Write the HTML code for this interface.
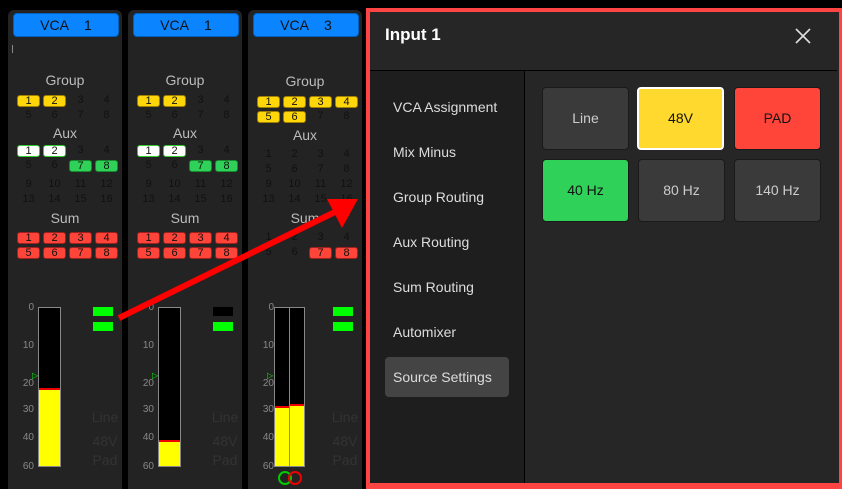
<!DOCTYPE html><html><head><style>
*{margin:0;padding:0;box-sizing:border-box}
html,body{width:842px;height:489px;overflow:hidden}
body{background:#000;position:relative;font-family:"Liberation Sans",sans-serif}
.s{position:absolute;top:10px;width:114px;height:479px;background:#232323;border-radius:6px 6px 0 0}
.v{position:absolute;left:5px;top:3px;width:106px;height:24px;background:#0a84ff;border:1px solid #0060c0;border-radius:4px;color:#111;font-size:14px;text-align:center;line-height:22px;word-spacing:12px}
.l{position:absolute;left:0;width:114px;text-align:center;color:#bbb;font-size:14px}
.r{position:absolute;left:9px;width:110px;height:12px}
.r span{position:absolute;top:0;width:23px;height:12px;font-size:11px;line-height:11px;text-align:center;color:#111;border-radius:3px}
.r span:nth-child(1){left:0}.r span:nth-child(2){left:26px}.r span:nth-child(3){left:52px}.r span:nth-child(4){left:78px}
.y{background:#ffd60a;border:1px solid #a08000}.w{background:#fff;border:1px solid #3c3}.g{background:#30d158;border:1px solid #1a8a30}.rd{background:#ff453a;border:1px solid #a02020}
.m{position:absolute;top:297px;height:160px;background:#000;border:1px solid #888}
.f{position:absolute;left:0;right:0;bottom:0;background:#ff0;border-top:2px solid #e00}
.t{position:absolute;left:0;width:26px;text-align:right;color:#888;font-size:10px}
.gb{position:absolute;left:85px;width:20px;height:9px;background:#0f0}
.ft{position:absolute;left:80px;width:34px;text-align:center;color:#333;font-size:14px;line-height:22px}
.sb{position:absolute;left:393px;color:#ddd;font-size:14px}
.b{position:absolute;width:87px;height:63px;border-radius:4px;background:#3a3a3a;border:1px solid #1a1a1a;color:#ccc;font-size:14px;text-align:center;line-height:61px}
</style></head><body>

<div class="s" style="left:8px">
<div class="v">VCA 1</div>
<div style="position:absolute;left:4px;top:35px;width:1px;height:8px;background:#888"></div>
<div class="l" style="top:62px">Group</div>
<div class="r" style="top:85px"><span class="y">1</span><span class="y">2</span><span>3</span><span>4</span></div>
<div class="r" style="top:100px"><span>5</span><span>6</span><span>7</span><span>8</span></div>
<div class="l" style="top:115px">Aux</div>
<div class="r" style="top:135px"><span class="w">1</span><span class="w">2</span><span>3</span><span>4</span></div>
<div class="r" style="top:150px"><span>5</span><span>6</span><span class="g">7</span><span class="g">8</span></div>
<div class="r" style="top:169px"><span>9</span><span>10</span><span>11</span><span>12</span></div>
<div class="r" style="top:184px"><span>13</span><span>14</span><span>15</span><span>16</span></div>
<div class="l" style="top:200px">Sum</div>
<div class="r" style="top:222px"><span class="rd">1</span><span class="rd">2</span><span class="rd">3</span><span class="rd">4</span></div>
<div class="r" style="top:237px"><span class="rd">5</span><span class="rd">6</span><span class="rd">7</span><span class="rd">8</span></div>
<div class="t" style="top:292px">0</div><div class="t" style="top:330px">10</div><div class="t" style="top:368px">20</div><div class="t" style="top:394px">30</div><div class="t" style="top:422px">40</div><div class="t" style="top:451px">60</div>
<div style="position:absolute;left:24px;top:361px;color:#0f0;font-size:8px">▷</div>
<div class="m" style="left:30px;width:23px"><div class="f" style="height:78px"></div></div>
<div class="gb" style="top:297px"></div><div class="gb" style="top:312px"></div>
<div class="ft" style="top:396px">Line</div><div class="ft" style="top:420px">48V</div><div class="ft" style="top:439px">Pad</div>
</div>

<div class="s" style="left:128px">
<div class="v">VCA 1</div>
<div class="l" style="top:62px">Group</div>
<div class="r" style="top:85px"><span class="y">1</span><span class="y">2</span><span>3</span><span>4</span></div>
<div class="r" style="top:100px"><span>5</span><span>6</span><span>7</span><span>8</span></div>
<div class="l" style="top:115px">Aux</div>
<div class="r" style="top:135px"><span class="w">1</span><span class="w">2</span><span>3</span><span>4</span></div>
<div class="r" style="top:150px"><span>5</span><span>6</span><span class="g">7</span><span class="g">8</span></div>
<div class="r" style="top:169px"><span>9</span><span>10</span><span>11</span><span>12</span></div>
<div class="r" style="top:184px"><span>13</span><span>14</span><span>15</span><span>16</span></div>
<div class="l" style="top:200px">Sum</div>
<div class="r" style="top:222px"><span class="rd">1</span><span class="rd">2</span><span class="rd">3</span><span class="rd">4</span></div>
<div class="r" style="top:237px"><span class="rd">5</span><span class="rd">6</span><span class="rd">7</span><span class="rd">8</span></div>
<div class="t" style="top:292px">0</div><div class="t" style="top:330px">10</div><div class="t" style="top:368px">20</div><div class="t" style="top:394px">30</div><div class="t" style="top:422px">40</div><div class="t" style="top:451px">60</div>
<div style="position:absolute;left:24px;top:361px;color:#0f0;font-size:8px">▷</div>
<div class="m" style="left:30px;width:23px"><div class="f" style="height:26px"></div></div>
<div class="gb" style="top:297px;background:#000"></div><div class="gb" style="top:312px"></div>
<div class="ft" style="top:396px">Line</div><div class="ft" style="top:420px">48V</div><div class="ft" style="top:439px">Pad</div>
</div>

<div class="s" style="left:248px">
<div class="v">VCA 3</div>
<div class="l" style="top:63px">Group</div>
<div class="r" style="top:86px"><span class="y">1</span><span class="y">2</span><span class="y">3</span><span class="y">4</span></div>
<div class="r" style="top:101px"><span class="y">5</span><span class="y">6</span><span>7</span><span>8</span></div>
<div class="l" style="top:117px">Aux</div>
<div class="r" style="top:139px"><span>1</span><span>2</span><span>3</span><span>4</span></div>
<div class="r" style="top:154px"><span>5</span><span>6</span><span>7</span><span>8</span></div>
<div class="r" style="top:169px"><span>9</span><span>10</span><span>11</span><span>12</span></div>
<div class="r" style="top:184px"><span>13</span><span>14</span><span>15</span><span>16</span></div>
<div class="l" style="top:200px">Sum</div>
<div class="r" style="top:222px"><span>1</span><span>2</span><span>3</span><span>4</span></div>
<div class="r" style="top:237px"><span>5</span><span>6</span><span class="rd">7</span><span class="rd">8</span></div>
<div class="t" style="top:292px">0</div><div class="t" style="top:330px">10</div><div class="t" style="top:368px">20</div><div class="t" style="top:394px">30</div><div class="t" style="top:422px">40</div><div class="t" style="top:451px">60</div>
<div style="position:absolute;left:19px;top:361px;color:#0f0;font-size:8px">▷</div>
<div class="m" style="left:26px;width:16px"><div class="f" style="height:60px"></div></div>
<div class="m" style="left:41px;width:16px"><div class="f" style="height:62px"></div></div>
<div style="position:absolute;left:30px;top:461px;width:14px;height:14px;border:2px solid #0c0;border-radius:50%"></div>
<div style="position:absolute;left:40px;top:461px;width:14px;height:14px;border:2px solid #e00;border-radius:50%"></div>
<div class="gb" style="top:297px"></div><div class="gb" style="top:312px"></div>
<div class="ft" style="top:396px">Line</div><div class="ft" style="top:420px">48V</div><div class="ft" style="top:439px">Pad</div>
</div>

<div style="position:absolute;left:366px;top:8px;width:476px;height:481px;border:4px solid #f44;border-right-width:3px;border-bottom-width:6px;background:#262626"></div>
<div style="position:absolute;left:370px;top:70px;width:467px;height:1px;background:#000"></div>
<div style="position:absolute;left:370px;top:71px;width:155px;height:412px;background:#1e1e1e;border-right:1px solid #000"></div>
<div style="position:absolute;left:385px;top:25px;color:#fff;font-size:17px;font-weight:bold">Input 1</div>
<svg style="position:absolute;left:795px;top:28px" width="16" height="16"><path d="M1 1L15 15M15 1L1 15" stroke="#ddd" stroke-width="1.6"/></svg>
<div class="sb" style="top:99px">VCA Assignment</div>
<div class="sb" style="top:144px">Mix Minus</div>
<div class="sb" style="top:189px">Group Routing</div>
<div class="sb" style="top:234px">Aux Routing</div>
<div class="sb" style="top:279px">Sum Routing</div>
<div class="sb" style="top:324px">Automixer</div>
<div style="position:absolute;left:385px;top:357px;width:124px;height:40px;background:#444;border-radius:4px"></div>
<div class="sb" style="top:369px">Source Settings</div>
<div class="b" style="left:542px;top:87px">Line</div>
<div class="b" style="left:637px;top:87px;background:#ffd92e;border:2px solid #fff;color:#111;line-height:59px">48V</div>
<div class="b" style="left:734px;top:87px;background:#ff453a;color:#111">PAD</div>
<div class="b" style="left:542px;top:159px;background:#30d158;color:#111">40 Hz</div>
<div class="b" style="left:638px;top:159px">80 Hz</div>
<div class="b" style="left:734px;top:159px">140 Hz</div>

<svg style="position:absolute;left:0;top:0" width="842" height="489"><line x1="119" y1="318" x2="335" y2="212" stroke="#f00" stroke-width="6"/><polygon points="358,199 327,199 342,228" fill="#f00"/></svg>
</body></html>
